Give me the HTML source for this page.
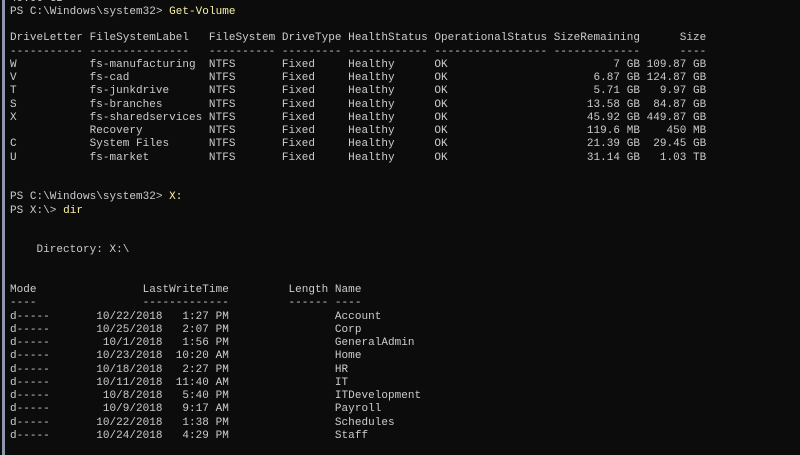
<!DOCTYPE html>
<html><head><meta charset="utf-8"><style>
html,body{margin:0;padding:0;background:#0c0c0c;width:800px;height:455px;overflow:hidden}
.b{position:absolute;left:2px;top:0;width:3px;height:455px;background:#8d96ab}
pre{position:absolute;left:10px;top:-7.3px;margin:0;font-family:"Liberation Mono",monospace;font-size:11px;letter-spacing:0.03px;line-height:13.25px;color:#cccccc;white-space:pre}
.y{color:#f9f1a5}
</style></head><body><div class="b"></div><pre>49.00 GB
PS C:\Windows\system32> <span class="y">Get-Volume</span>

DriveLetter FileSystemLabel   FileSystem DriveType HealthStatus OperationalStatus SizeRemaining      Size
----------- ---------------   ---------- --------- ------------ ----------------- -------------      ----
W           fs-manufacturing  NTFS       Fixed     Healthy      OK                         7 GB 109.87 GB
V           fs-cad            NTFS       Fixed     Healthy      OK                      6.87 GB 124.87 GB
T           fs-junkdrive      NTFS       Fixed     Healthy      OK                      5.71 GB   9.97 GB
S           fs-branches       NTFS       Fixed     Healthy      OK                     13.58 GB  84.87 GB
X           fs-sharedservices NTFS       Fixed     Healthy      OK                     45.92 GB 449.87 GB
            Recovery          NTFS       Fixed     Healthy      OK                     119.6 MB    450 MB
C           System Files      NTFS       Fixed     Healthy      OK                     21.39 GB  29.45 GB
U           fs-market         NTFS       Fixed     Healthy      OK                     31.14 GB   1.03 TB


PS C:\Windows\system32> <span class="y">X:</span>
PS X:\> <span class="y">dir</span>


    Directory: X:\


Mode                LastWriteTime         Length Name
----                -------------         ------ ----
d-----       10/22/2018   1:27 PM                Account
d-----       10/25/2018   2:07 PM                Corp
d-----        10/1/2018   1:56 PM                GeneralAdmin
d-----       10/23/2018  10:20 AM                Home
d-----       10/18/2018   2:27 PM                HR
d-----       10/11/2018  11:40 AM                IT
d-----        10/8/2018   5:40 PM                ITDevelopment
d-----        10/9/2018   9:17 AM                Payroll
d-----       10/22/2018   1:38 PM                Schedules
d-----       10/24/2018   4:29 PM                Staff
</pre></body></html>
